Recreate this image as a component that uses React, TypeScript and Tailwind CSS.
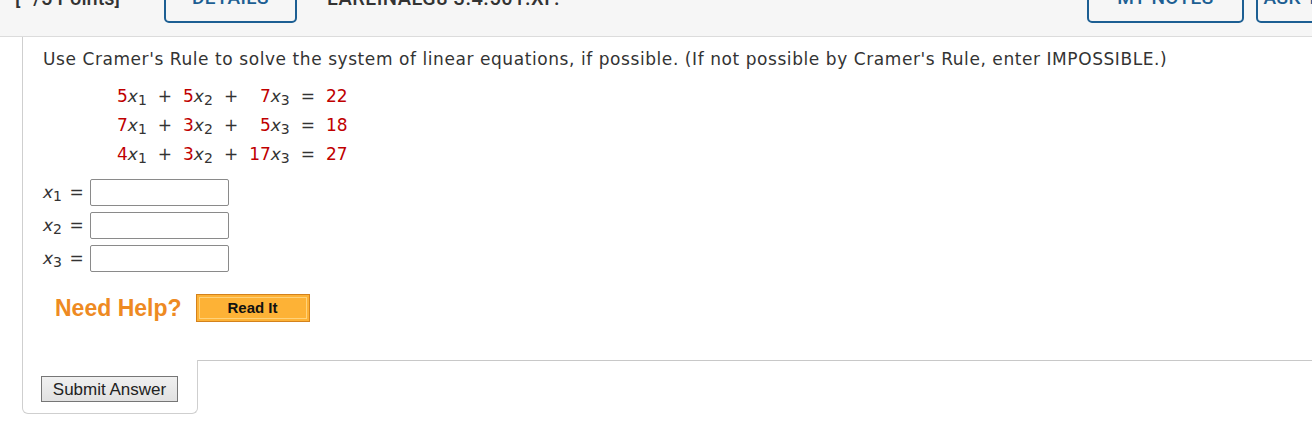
const verdana = { fontFamily: '"DejaVu Sans", Verdana, sans-serif' }

function X({ n }: { n: number }) {
  return (
    <span className="text-[#333]">
      <i className="not-italic inline-block -skew-x-12">x</i>
      <sub className="text-[14px] relative top-[3px]">{n}</sub>
    </span>
  )
}

function Term({ c, n }: { c: string; n: number }) {
  return (
    <span className="whitespace-nowrap">
      <span className="text-[#c00000]">{c}</span>
      <X n={n} />
    </span>
  )
}

const rows = [
  ['5', '5', '7', '22'],
  ['7', '3', '5', '18'],
  ['4', '3', '17', '27'],
]

function HeaderButton({ label, className }: { label: string; className: string }) {
  return (
    <div
      className={`h-[50px] border-2 border-[#1d5f93] rounded-[5px] flex items-center justify-center text-[#1d5f93] text-[19px] font-medium tracking-wide ${className}`}
    >
      {label}
    </div>
  )
}

export default function App() {
  return (
    <div className="w-[1312px] h-[430px] bg-white overflow-hidden" style={verdana}>
      {/* top bar, scrolled mostly out of view */}
      <div className="h-[37px] bg-[#f6f6f6] border-b border-[#dcdcdc] overflow-hidden relative">
        <div
          className="flex items-center mt-[-27px] h-[50px] text-[#333]"
          style={{ fontFamily: 'Roboto, "Open Sans", sans-serif' }}
        >
          <span className="ml-[15px] w-[120px] text-[20px] font-medium">[–/5 Points]</span>
          <HeaderButton label="DETAILS" className="ml-[29px] w-[133px]" />
          <span className="ml-[30px] text-[20px] font-medium tracking-wide">LARLINALG8 3.4.501.XP.</span>
          <div className="flex-1" />
          <HeaderButton label="MY NOTES" className="w-[157px]" />
          <HeaderButton label="ASK YOUR TEACHER" className="ml-[12px] w-[200px] shrink-0 -mr-[144px]" />
        </div>
      </div>

      <div className="ml-[22px] border-l border-[#cfcfcf] pl-[20px] pt-[11px] h-[323px] text-[17px] tracking-[0.57px] text-[#333]">
        <p className="leading-[22px]">
          Use Cramer's Rule to solve the system of linear equations, if possible. (If not possible by Cramer's Rule, enter IMPOSSIBLE.)
        </p>

        <div className="ml-[74px] mt-[12px] grid grid-cols-[auto_auto_auto_auto_auto_auto_auto] gap-x-[11px] w-max tracking-normal">
          {rows.map((r, i) => (
            <div key={i} className="contents">
              <div className="text-right h-[29px] leading-[29px]"><Term c={r[0]} n={1} /></div>
              <div className="h-[29px] leading-[29px]">+</div>
              <div className="text-right h-[29px] leading-[29px]"><Term c={r[1]} n={2} /></div>
              <div className="h-[29px] leading-[29px]">+</div>
              <div className="text-right h-[29px] leading-[29px]"><Term c={r[2]} n={3} /></div>
              <div className="h-[29px] leading-[29px]">=</div>
              <div className="h-[29px] leading-[29px] text-[#c00000]">{r[3]}</div>
            </div>
          ))}
        </div>

        <div className="mt-[10px] flex flex-col gap-[6px] tracking-normal">
          {[1, 2, 3].map((n) => (
            <div key={n} className="flex items-center h-[27px]">
              <span className="w-[47px] whitespace-nowrap">
                <X n={n} /> <span className="ml-[2px]">=</span>
              </span>
              <input
                type="text"
                className="w-[139px] h-[27px] border border-[#8a8a8a] rounded-[2px] bg-white outline-none"
              />
            </div>
          ))}
        </div>

        <div className="mt-[19px] ml-[12px] flex items-center tracking-normal" style={{ fontFamily: '"Liberation Sans", Arial, sans-serif' }}>
          <span className="text-[23px] font-bold text-[#ee8a22]">Need Help?</span>
          <button className="ml-[14px] w-[114px] h-[28px] border border-[#d4821c] bg-[#fdb236] p-[2px]">
            <span className="flex items-center justify-center h-full border border-[#ffd27a] text-[15px] font-bold text-[#111]">
              Read It
            </span>
          </button>
        </div>
      </div>

      <div className="flex">
        <div className="ml-[22px] w-[176px] h-[54px] border-l border-r border-b border-[#cfcfcf] rounded-b-[6px] pt-[16px] pl-[18px]">
          <button
            className="w-[137px] h-[26px] border border-[#767676] bg-gradient-to-b from-[#f0f0f0] to-[#e1e1e1] text-[17px] text-[#222] leading-none"
            style={{ fontFamily: '"Liberation Sans", Arial, sans-serif' }}
          >
            Submit Answer
          </button>
        </div>
        <div className="flex-1 border-t border-[#c8c8c8]" />
      </div>
    </div>
  )
}
